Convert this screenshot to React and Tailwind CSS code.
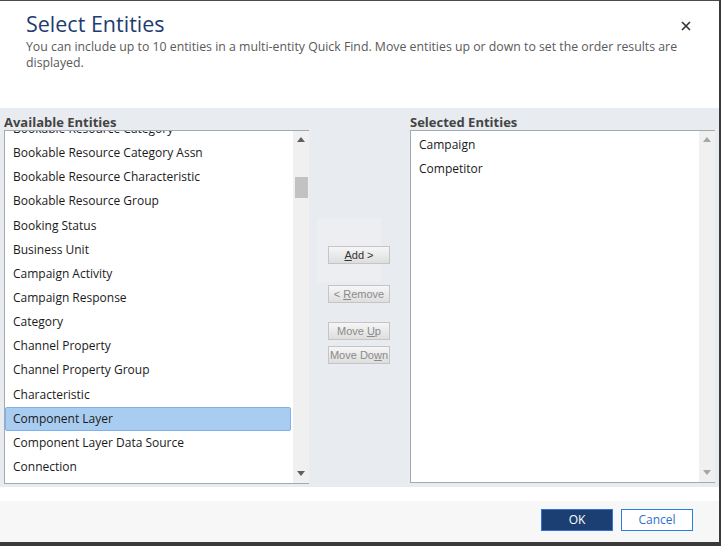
import React from "react";

const left = [
  "Bookable Resource Category",
  "Bookable Resource Category Assn",
  "Bookable Resource Characteristic",
  "Bookable Resource Group",
  "Booking Status",
  "Business Unit",
  "Campaign Activity",
  "Campaign Response",
  "Category",
  "Channel Property",
  "Channel Property Group",
  "Characteristic",
  "Component Layer",
  "Component Layer Data Source",
  "Connection",
];

const right = ["Campaign", "Competitor"];

const font = { fontFamily: '"Segoe UI", "Open Sans", "Noto Sans", sans-serif' };

function Arrow({ up, color }) {
  return (
    <svg width="8" height="5" viewBox="0 0 8 5">
      {up ? <path d="M0 5 L4 0 L8 5 Z" fill={color} /> : <path d="M0 0 L4 5 L8 0 Z" fill={color} />}
    </svg>
  );
}

function Btn({ children, dark }) {
  return (
    <div
      className={`w-[62px] h-[18px] flex items-center justify-center border border-[#c5c5c5] bg-gradient-to-b from-[#f6f6f6] to-[#dedede] text-[11px] ${dark ? "text-[#333]" : "text-[#8a8a8a]"}`}
      style={{ fontFamily: '"Liberation Sans", Arial, sans-serif' }}
    >
      {children}
    </div>
  );
}

export default function App() {
  return (
    <div className="w-[721px] h-[546px] bg-[#3a3a3a] overflow-hidden" style={font}>
      <div className="w-[719px] h-[542px] bg-white border-t border-[#4a4a4a] flex flex-col">
        {/* header */}
        <div className="h-[107px] relative pl-[26px] pt-[8px]">
          <div className="text-[21.5px] leading-[30px] text-[#1e3c70]">Select Entities</div>
          <div className="text-[12.3px] leading-[16px] text-[#5a5a5a] pr-[30px]">
            You can include up to 10 entities in a multi-entity Quick Find. Move entities up or down to set the order results are displayed.
          </div>
          <div className="absolute right-[28px] top-[20px] text-[#333]">
            <svg width="10" height="10" viewBox="0 0 10 10">
              <path d="M1 1 L9 9 M9 1 L1 9" stroke="#333" strokeWidth="1.6" />
            </svg>
          </div>
        </div>
        {/* body */}
        <div className="h-[379px] bg-[#e8ebef] flex pl-[4px]">
          {/* left column */}
          <div className="w-[305px] flex flex-col pt-[6px]">
            <div className="text-[13px] font-bold leading-[16px] text-[#444]">Available Entities</div>
            <div className="h-[354px] flex border border-[#a3aaae] border-r-0 bg-white">
              <div className="flex-1 overflow-hidden">
                <div className="-mt-[14px] flex flex-col">
                  {left.map((t) => (
                    <div
                      key={t}
                      className={`h-[24.15px] shrink-0 flex items-center text-[12px] text-[#1a1a1a] ${t === "Component Layer" ? "bg-[#a9cdf1] border border-[#7fb1ec] rounded-[2px] pl-[7px] mr-[2px]" : "pl-[8px]"}`}
                    >
                      {t}
                    </div>
                  ))}
                </div>
              </div>
              <div className="w-[16px] bg-[#f0f0f0] flex flex-col items-center justify-between pt-[6px] pb-[7px] relative">
                <Arrow up color="#606060" />
                <div className="absolute left-[2px] top-[46px] w-[13px] h-[21px] bg-[#c2c2c2]" />
                <Arrow color="#606060" />
              </div>
            </div>
          </div>
          {/* middle */}
          <div className="w-[101px] relative flex flex-col pl-[19px] pt-[138px]">
            <div className="absolute left-[8px] top-[110px] w-[64px] h-[64px] bg-[#eceef1]" />
            <div className="relative flex flex-col items-start">
              <Btn dark><span><span className="underline">A</span>dd &gt;</span></Btn>
              <div className="h-[21px]" />
              <Btn>&lt; <span className="underline ml-[3px]">R</span>emove</Btn>
              <div className="h-[19px]" />
              <Btn>Move <span className="underline ml-[3px]">U</span>p</Btn>
              <div className="h-[6px]" />
              <Btn>Move Do<span className="underline">w</span>n</Btn>
            </div>
          </div>
          {/* right column */}
          <div className="w-[305px] flex flex-col pt-[6px]">
            <div className="text-[13px] font-bold leading-[16px] text-[#444]">Selected Entities</div>
            <div className="h-[353px] flex border border-[#a3aaae] border-r-0 bg-white">
              <div className="flex-1 overflow-hidden">
                <div className="flex flex-col pt-[2px]">
                  {right.map((t) => (
                    <div key={t} className="h-[24px] flex items-center pl-[8px] text-[12px] text-[#1a1a1a]">
                      {t}
                    </div>
                  ))}
                </div>
              </div>
              <div className="w-[16px] bg-[#f0f0f0] flex flex-col items-center justify-between pt-[6px] pb-[7px]">
                <Arrow up color="#a6a6a6" />
                <Arrow color="#a6a6a6" />
              </div>
            </div>
          </div>
        </div>
        <div className="h-[14px] bg-white" />
        {/* footer */}
        <div className="flex-1 bg-[#f7f7f7] flex justify-end items-start pt-[8px] pr-[26px] gap-[8px]">
          <div className="w-[72px] h-[22px] bg-[#1c3f73] border border-[#2a74d3] text-white text-[12px] flex items-center justify-center">
            OK
          </div>
          <div className="w-[72px] h-[22px] bg-white border border-[#2b7de0] text-[#2f6fcf] text-[12px] flex items-center justify-center">
            Cancel
          </div>
        </div>
      </div>
    </div>
  );
}
